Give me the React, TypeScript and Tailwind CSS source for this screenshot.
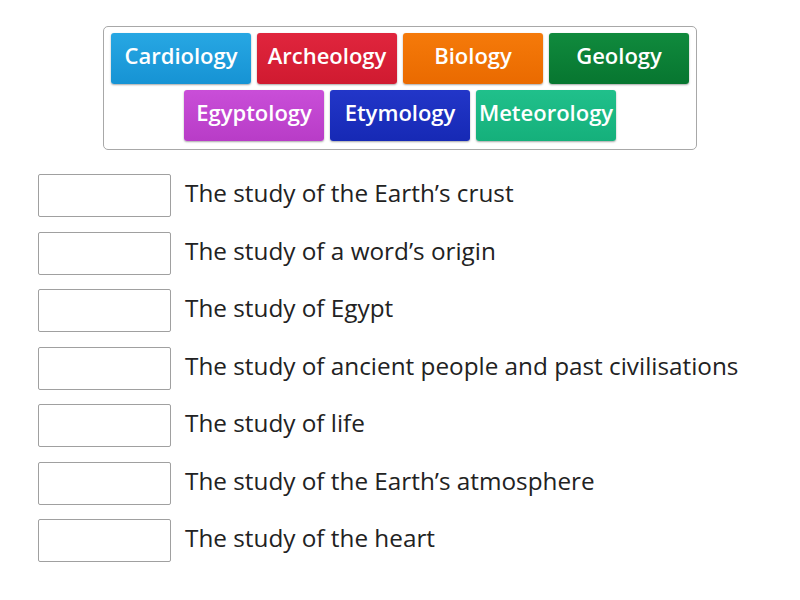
import React from 'react';

const tiles = [
  { label: 'Cardiology', cls: 'bg-gradient-to-b from-[#27a7e3] to-[#1693d4]' },
  { label: 'Archeology', cls: 'bg-gradient-to-b from-[#e0253d] to-[#d01a30]' },
  { label: 'Biology', cls: 'bg-gradient-to-b from-[#f57a0a] to-[#ea6a00]' },
  { label: 'Geology', cls: 'bg-gradient-to-b from-[#108a3d] to-[#077630]' },
  { label: 'Egyptology', cls: 'bg-gradient-to-b from-[#c94ed8] to-[#b83cc7]' },
  { label: 'Etymology', cls: 'bg-gradient-to-b from-[#2236c8] to-[#1629b5]' },
  { label: 'Meteorology', cls: 'bg-gradient-to-b from-[#20c08b] to-[#15b07b]' },
];

const rows = [
  'The study of the Earth\u2019s crust',
  'The study of a word\u2019s origin',
  'The study of Egypt',
  'The study of ancient people and past civilisations',
  'The study of life',
  'The study of the Earth\u2019s atmosphere',
  'The study of the heart',
];

const Tile = ({ label, cls }: { label: string; cls: string }) => (
  <div
    className={`w-[140px] h-[51px] rounded-[3px] flex items-center justify-center pb-[7px] text-white text-[22px] leading-none font-semibold shadow-[0_1px_2px_rgba(0,0,0,0.35)] ${cls}`}
  >
    {label}
  </div>
);

export default function App() {
  return (
    <div className="w-[800px] h-[600px] bg-white font-['Open_Sans',sans-serif] text-[#222]">
      <div className="pt-[26px] flex justify-center">
        <div className="w-[594px] h-[124px] border border-[#a8a8a8] rounded-[5px] px-[6px] pt-[6px] flex flex-col items-center gap-[6px]">
          <div className="flex gap-[6px]">
            {tiles.slice(0, 4).map((t) => (
              <Tile key={t.label} {...t} />
            ))}
          </div>
          <div className="flex gap-[6px]">
            {tiles.slice(4).map((t) => (
              <Tile key={t.label} {...t} />
            ))}
          </div>
        </div>
      </div>

      <div className="pl-[38px] pt-[24px] flex flex-col gap-[14.5px]">
        {rows.map((r) => (
          <div key={r} className="flex items-center h-[43px]">
            <div className="w-[133px] h-[43px] border border-[#a0a0a0] rounded-[2px] bg-white" />
            <div className="ml-[14px] text-[24.3px] leading-none pb-[4px]">{r}</div>
          </div>
        ))}
      </div>
    </div>
  );
}
